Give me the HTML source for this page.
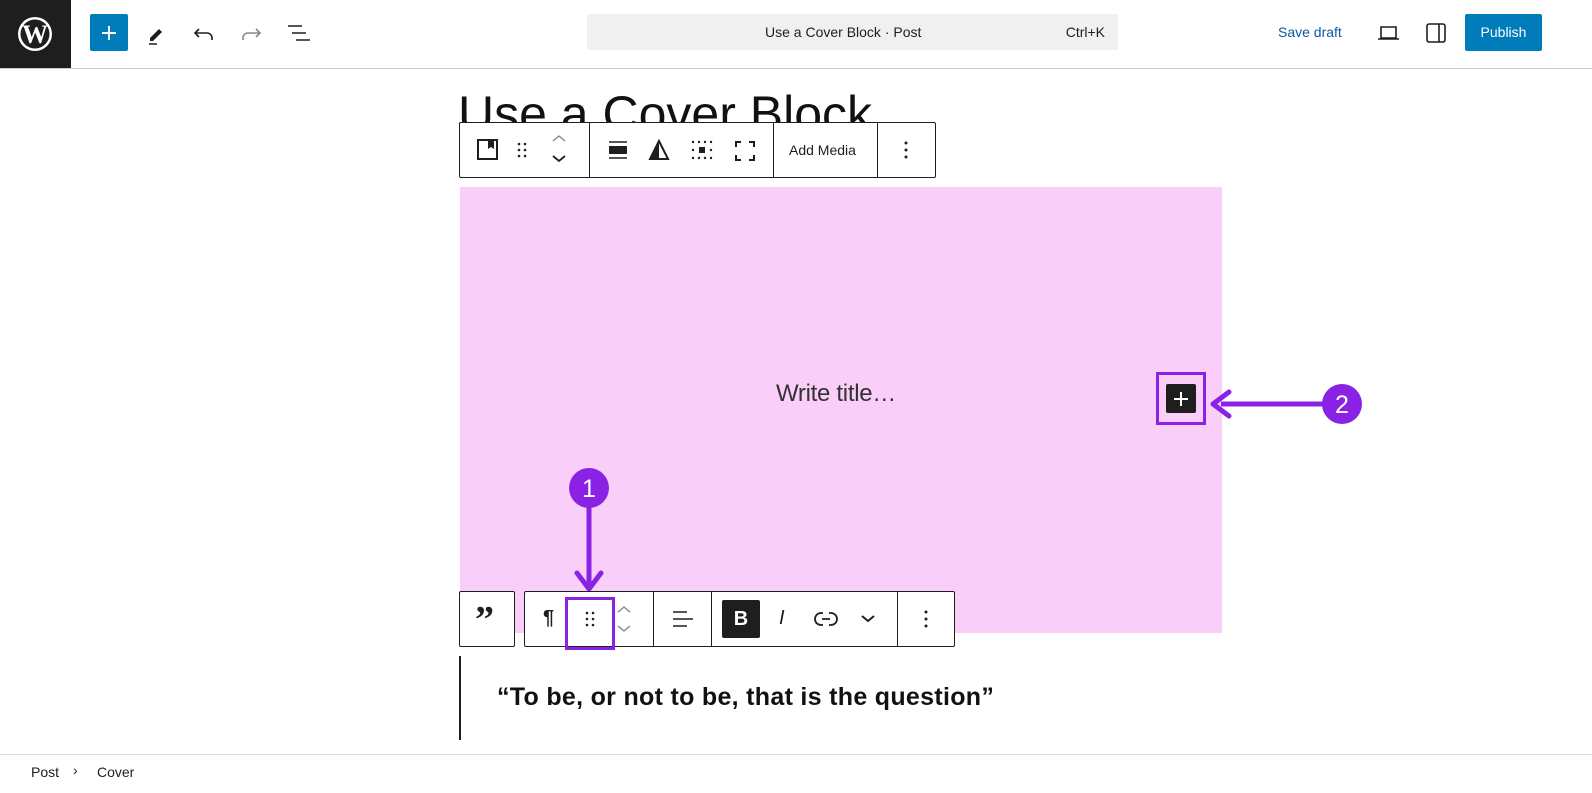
<!DOCTYPE html><html><head><meta charset="utf-8"><style>
*{box-sizing:border-box;margin:0;padding:0}
body{width:1592px;height:793px;position:relative;overflow:hidden;background:#fff;font-family:"Liberation Sans",sans-serif;color:#1e1e1e}
.a{position:absolute}
.tb{position:absolute;border:1px solid #1e1e1e;background:#fff;border-radius:2px}
.dv{position:absolute;top:0;bottom:0;width:1px;background:#1e1e1e}
svg{position:absolute}
</style></head><body>
<div class="a" style="left:0;top:0;width:1592px;height:69px;border-bottom:1px solid #ccc"></div>
<div class="a" style="left:0;top:0;width:71px;height:68px;background:#1e1e1e"></div>
<svg style="left:17px;top:16px" width="36" height="36" viewBox="0 0 36 36"><circle cx="18" cy="18" r="17" fill="#fff"/><circle cx="18" cy="18" r="14.5" fill="#1e1e1e"/><text x="18" y="27" text-anchor="middle" font-family="Liberation Serif" font-weight="bold" font-size="26" fill="#fff">W</text></svg>
<div class="a" style="left:90px;top:14px;width:38px;height:37px;background:#007cba;border-radius:2px"></div>
<svg style="left:98px;top:22px" width="22" height="22"><path d="M11 4v14M4 11h14" stroke="#fff" stroke-width="2"/></svg>
<svg style="left:144px;top:22px" width="24" height="24"><path d="M6 16l9-9 3 3-9 9H6z" fill="#1e1e1e"/><path d="M5 22h8" stroke="#1e1e1e" stroke-width="1.5"/></svg>
<svg style="left:192px;top:22px" width="24" height="22"><path d="M7 7l-4 4 4 4M3 11h12a5 5 0 0 1 5 5v2" fill="none" stroke="#1e1e1e" stroke-width="1.6"/></svg>
<svg style="left:239px;top:22px" width="24" height="22"><path d="M17 7l4 4-4 4M21 11H9a5 5 0 0 0-5 5v2" fill="none" stroke="#888" stroke-width="1.6"/></svg>
<svg style="left:286px;top:22px" width="26" height="22"><path d="M2 4h14M6 11h14M10 18h14" stroke="#1e1e1e" stroke-width="1.6"/></svg>
<div class="a" style="left:587px;top:14px;width:531px;height:36px;background:#f0f0f0;border-radius:2px;font-size:14px"><span class="a" style="left:178px;top:10px">Use a Cover Block · Post</span><span class="a" style="right:13px;top:10px">Ctrl+K</span></div>
<div class="a" style="left:1278px;top:24px;font-size:14px;color:#0a58a8">Save draft</div>
<svg style="left:1376px;top:22px" width="26" height="22"><path d="M5 5h15v11H5zM2 17h21" fill="none" stroke="#1e1e1e" stroke-width="1.6"/></svg>
<svg style="left:1425px;top:21px" width="24" height="24"><rect x="2" y="3" width="18" height="18" rx="2" fill="none" stroke="#1e1e1e" stroke-width="1.6"/><path d="M14 3v18" stroke="#1e1e1e" stroke-width="1.6"/></svg>
<div class="a" style="left:1465px;top:14px;width:77px;height:37px;background:#007cba;border-radius:2px;color:#fff;font-size:14px;text-align:center;line-height:37px">Publish</div>

<div class="a" style="left:458px;top:84px;font-size:50px;line-height:60px;color:#111">Use a Cover Block</div>
<div class="tb" style="left:459px;top:122px;width:477px;height:56px">
<div class="dv" style="left:129px"></div><div class="dv" style="left:313px"></div><div class="dv" style="left:417px"></div>
<svg style="left:17px;top:16px" width="22" height="22"><rect x="1" y="1" width="19" height="19" fill="none" stroke="#1e1e1e" stroke-width="2"/><path d="M11 1h6v9l-3-2-3 2z" fill="#1e1e1e"/></svg>
<svg style="left:56px;top:18px" width="12" height="18"><g fill="#1e1e1e"><circle cx="3" cy="3" r="1.3"/><circle cx="9" cy="3" r="1.3"/><circle cx="3" cy="9" r="1.3"/><circle cx="9" cy="9" r="1.3"/><circle cx="3" cy="15" r="1.3"/><circle cx="9" cy="15" r="1.3"/></g></svg>
<svg style="left:90px;top:10px" width="18" height="34"><path d="M3 8l6-5 6 5" fill="none" stroke="#888" stroke-width="1.4"/><path d="M3 23l6 5 6-5" fill="none" stroke="#1e1e1e" stroke-width="1.8"/></svg>
<svg style="left:147px;top:16px" width="22" height="22"><path d="M2 3h18M2 19h18" stroke="#1e1e1e" stroke-width="1.6"/><rect x="2" y="7" width="18" height="8" fill="#1e1e1e"/></svg>
<svg style="left:188px;top:16px" width="22" height="22"><path d="M11 2L2 20h18z" fill="none" stroke="#1e1e1e" stroke-width="2"/><path d="M11 2v18H2z" fill="#1e1e1e"/></svg>
<svg style="left:231px;top:17px" width="22" height="20"><g fill="#1e1e1e"><circle cx="2" cy="2" r="1.2"/><circle cx="8" cy="2" r="1.2"/><circle cx="14" cy="2" r="1.2"/><circle cx="20" cy="2" r="1.2"/><circle cx="2" cy="10" r="1.2"/><circle cx="20" cy="10" r="1.2"/><circle cx="2" cy="18" r="1.2"/><circle cx="8" cy="18" r="1.2"/><circle cx="14" cy="18" r="1.2"/><circle cx="20" cy="18" r="1.2"/><rect x="8" y="7" width="6" height="6"/></g></svg>
<svg style="left:274px;top:17px" width="22" height="22"><path d="M2 7V2h5M15 2h5v5M20 15v5h-5M7 20H2v-5" fill="none" stroke="#1e1e1e" stroke-width="2"/></svg>
<div class="a" style="left:329px;top:19px;font-size:14px">Add Media</div>
<svg style="left:443px;top:17px" width="6" height="22"><g fill="#1e1e1e"><circle cx="3" cy="3" r="1.5"/><circle cx="3" cy="10" r="1.5"/><circle cx="3" cy="17" r="1.5"/></g></svg>
</div>

<div class="a" style="left:460px;top:187px;width:762px;height:446px;background:#f9cff9"></div>
<div class="a" style="left:776px;top:380px;font-size:24px;color:#333;letter-spacing:-0.3px">Write title…</div>
<div class="a" style="left:1156px;top:372px;width:50px;height:53px;border:3px solid #8a22e6"></div>
<div class="a" style="left:1166px;top:384px;width:30px;height:29px;background:#1e1e1e;border-radius:2px"></div>
<svg style="left:1171px;top:389px" width="20" height="20"><path d="M10 3v14M3 10h14" stroke="#fff" stroke-width="2"/></svg>
<svg style="left:1205px;top:380px" width="180" height="50"><path d="M120 24H16" stroke="#8a22e6" stroke-width="5"/><path d="M24 12L8 24l16 12" fill="none" stroke="#8a22e6" stroke-width="5" stroke-linecap="round" stroke-linejoin="round"/><circle cx="137" cy="24" r="20" fill="#8a22e6"/><text x="137" y="33" text-anchor="middle" font-size="25" fill="#fff" font-family="Liberation Sans">2</text></svg>
<svg style="left:565px;top:465px" width="50" height="130"><circle cx="24" cy="23" r="20" fill="#8a22e6"/><text x="24" y="32" text-anchor="middle" font-size="25" fill="#fff" font-family="Liberation Sans">1</text><path d="M24 40v80" stroke="#8a22e6" stroke-width="5"/><path d="M12 108l12 16 12-16" fill="none" stroke="#8a22e6" stroke-width="5" stroke-linecap="round" stroke-linejoin="round"/></svg>

<div class="tb" style="left:459px;top:591px;width:56px;height:56px"><div class="a" style="left:15px;top:6px;font-size:38px;font-weight:bold;font-family:'Liberation Serif'">”</div></div>
<div class="tb" style="left:524px;top:591px;width:431px;height:56px">
<div class="dv" style="left:128px"></div><div class="dv" style="left:186px"></div><div class="dv" style="left:372px"></div>
<div class="a" style="left:18px;top:15px;font-size:20px;font-weight:bold">¶</div>
<svg style="left:59px;top:18px" width="12" height="18"><g fill="#1e1e1e"><circle cx="3" cy="3" r="1.3"/><circle cx="9" cy="3" r="1.3"/><circle cx="3" cy="9" r="1.3"/><circle cx="9" cy="9" r="1.3"/><circle cx="3" cy="15" r="1.3"/><circle cx="9" cy="15" r="1.3"/></g></svg>
<svg style="left:90px;top:10px" width="18" height="34"><path d="M3 10l6-5 6 5M3 24l6 5 6-5" fill="none" stroke="#888" stroke-width="1.4"/></svg>
<svg style="left:146px;top:16px" width="22" height="22"><path d="M2 4h14M2 11h20M2 18h14" stroke="#1e1e1e" stroke-width="1.6"/></svg>
<div class="a" style="left:197px;top:8px;width:38px;height:38px;background:#1e1e1e;border-radius:2px;color:#fff;font-weight:bold;font-size:20px;text-align:center;line-height:38px">B</div>
<div class="a" style="left:254px;top:15px;font-size:20px;font-style:italic">I</div>
<svg style="left:289px;top:18px" width="24" height="18"><path d="M9 3H7a6 6 0 0 0 0 12h2M15 3h2a6 6 0 0 1 0 12h-2M8 9h8" fill="none" stroke="#1e1e1e" stroke-width="1.8"/></svg>
<svg style="left:335px;top:22px" width="16" height="10"><path d="M2 2l6 5 6-5" fill="none" stroke="#1e1e1e" stroke-width="2"/></svg>
<svg style="left:398px;top:17px" width="6" height="22"><g fill="#1e1e1e"><circle cx="3" cy="3" r="1.5"/><circle cx="3" cy="10" r="1.5"/><circle cx="3" cy="17" r="1.5"/></g></svg>
</div>
<div class="a" style="left:565px;top:597px;width:50px;height:53px;border:3px solid #8a22e6"></div>

<div class="a" style="left:459px;top:656px;width:2px;height:84px;background:#1e1e1e"></div>
<div class="a" style="left:497px;top:683px;font-size:25px;font-weight:bold;color:#111;letter-spacing:0.3px">“To be, or not to be, that is the question”</div>

<div class="a" style="left:0;top:754px;width:1592px;height:39px;border-top:1px solid #ddd;font-size:14px"><span class="a" style="left:31px;top:9px">Post</span><span class="a" style="left:73px;top:7px">›</span><span class="a" style="left:97px;top:9px">Cover</span></div>
</body></html>
